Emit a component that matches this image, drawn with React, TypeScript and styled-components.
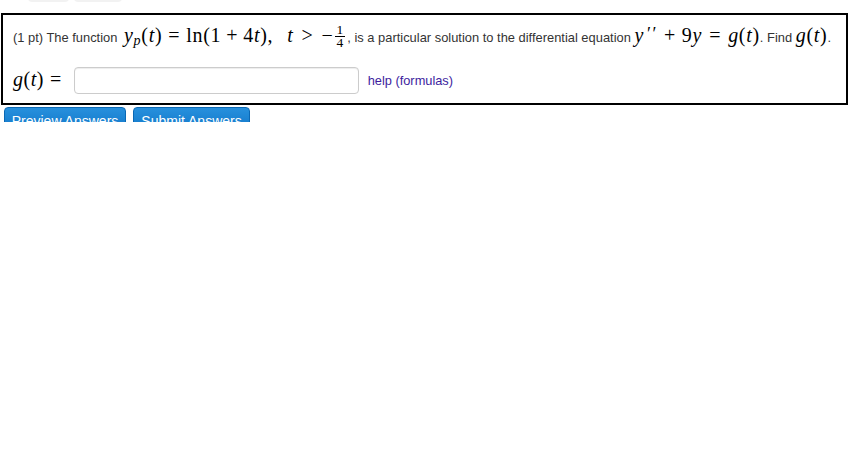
import React from "react";
import styled, { createGlobalStyle } from "styled-components";

const Global = createGlobalStyle`
  html, body { margin: 0; padding: 0; background: #fff; }
  body { font-family: "Liberation Sans", Arial, sans-serif; }
`;

const Page = styled.div`
  display: flex;
  flex-direction: column;
  width: 858px;
`;

const GhostRow = styled.div`
  display: flex;
  gap: 5px;
  height: 2px;
  overflow: hidden;
  padding-left: 28px;
`;

const Ghost = styled.div<{ $w: number }>`
  width: ${(p) => p.$w}px;
  height: 10px;
  margin-top: -8px;
  background: #f2f2f2;
  border-radius: 4px;
`;

const Problem = styled.div`
  margin: 11px 0 0 1px;
  width: 847px;
  height: 92px;
  box-sizing: border-box;
  border: 2px solid #000;
  padding: 0 0 0 10px;
  display: flex;
  flex-direction: column;
  color: #333;
  font-size: 12.9px;
`;

const Statement = styled.div`
  height: 40px;
  padding-top: 10px;
  box-sizing: border-box;
  line-height: 26px;
  white-space: nowrap;
`;

const AnswerRow = styled.div`
  display: flex;
  align-items: center;
  margin-top: 12px;
  height: 27px;
`;

const Math = styled.span<{ $gap?: number }>`
  font-family: "Liberation Serif", "Times New Roman", serif;
  font-size: 20px;
  letter-spacing: 0.7px;
  line-height: 1;
  color: #000;
  margin-left: ${(p) => p.$gap ?? 0}px;
`;

const V = styled.i`
  font-style: italic;
`;

const Sub = styled.sub`
  font-size: 14px;
  font-style: italic;
  vertical-align: -3px;
  line-height: 0;
`;

const Op = styled.span<{ $s?: number }>`
  margin: 0 ${(p) => p.$s ?? 5}px;
`;

const Prime = styled.span`
  font-size: 18px;
  vertical-align: 2px;
  line-height: 0;
  margin-left: 3px;
  letter-spacing: 1.5px;
`;

const Frac = styled.span`
  display: inline-flex;
  flex-direction: column;
  align-items: center;
  vertical-align: 8px;
  font-size: 13.5px;
  line-height: 10px;
  letter-spacing: 0;
  margin: 0 2px 0 1px;
`;

const Num = styled.span`
  padding: 0 2px 1px;
  border-bottom: 1px solid #000;
`;

const Den = styled.span`
  padding-top: 1px;
`;

const Label = styled.span`
  font-family: "Liberation Serif", "Times New Roman", serif;
  font-size: 20px;
  letter-spacing: 0.5px;
  color: #000;
  margin-top: -3px;
`;

const Input = styled.input`
  width: 285px;
  height: 27px;
  box-sizing: border-box;
  margin: 0 0 0 6px;
  padding: 4px 6px;
  border: 1px solid #ccc;
  border-radius: 4px;
  box-shadow: inset 0 1px 1px rgba(0, 0, 0, 0.075);
  font-size: 12px;
  outline: none;
`;

const HelpLink = styled.a`
  margin-left: 9px;
  color: #3d1d9e;
  font-size: 12.8px;
  text-decoration: none;
`;

const ButtonBar = styled.div`
  display: flex;
  align-items: flex-start;
  gap: 7px;
  margin-top: 2px;
  padding-left: 4px;
  height: 15px;
  overflow: hidden;
`;

const Button = styled.button<{ $w: number }>`
  width: ${(p) => p.$w}px;
  flex: none;
  padding: 4px 0 8px;
  border: 1px solid #0a68b4;
  border-radius: 4px;
  background: linear-gradient(#2790dd, #0a6fc2);
  color: #fff;
  font-family: "Liberation Sans", Arial, sans-serif;
  font-size: 14px;
  line-height: 18px;
  text-align: center;
`;

export default function App() {
  return (
    <Page>
      <Global />
      <GhostRow>
        <Ghost $w={41} />
        <Ghost $w={48} />
      </GhostRow>
      <Problem>
        <Statement>
          (1 pt) The function{" "}
          <Math $gap={3}>
            <V>y</V>
            <Sub>p</Sub>(<V>t</V>)<Op $s={6}>=</Op>ln(1<Op>+</Op>4<V>t</V>),
            <Op $s={7}></Op>
            <V>t</V>
            <Op $s={8}>&gt;</Op>−
            <Frac>
              <Num>1</Num>
              <Den>4</Den>
            </Frac>
          </Math>
          , is a particular solution to the differential equation{" "}
          <Math>
            <V>y</V>
            <Prime>′′</Prime>
            <Op $s={6}>+</Op>9<V>y</V>
            <Op $s={7}>=</Op>
            <V>g</V>(<V>t</V>)
          </Math>
          . Find{" "}
          <Math>
            <V>g</V>(<V>t</V>)
          </Math>
          .
        </Statement>
        <AnswerRow>
          <Label>
            <V>g</V>(<V>t</V>)<Op $s={6}>=</Op>
          </Label>
          <Input type="text" aria-label="answer" />
          <HelpLink href="#">help (formulas)</HelpLink>
        </AnswerRow>
      </Problem>
      <ButtonBar>
        <Button $w={122}>Preview Answers</Button>
        <Button $w={117}>Submit Answers</Button>
      </ButtonBar>
    </Page>
  );
}
